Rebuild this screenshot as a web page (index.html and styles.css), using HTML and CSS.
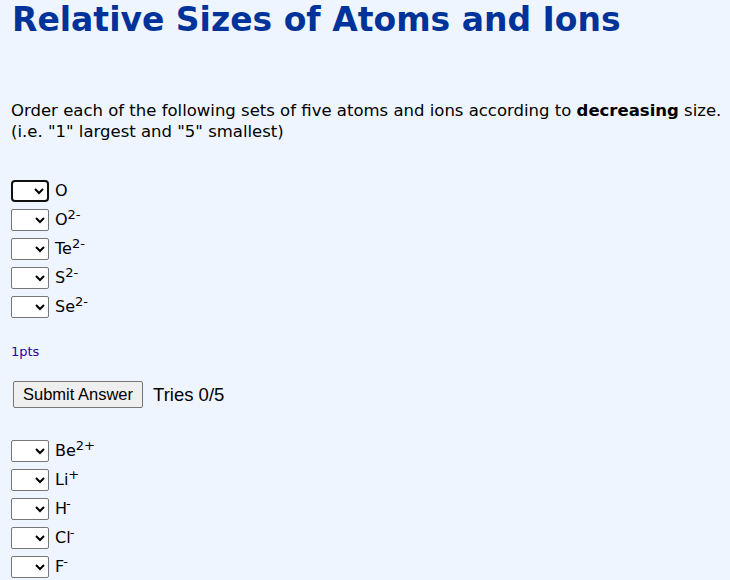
FILE: index.html
```html
<!DOCTYPE html>
<html lang="en">
<head>
  <meta charset="UTF-8">
  <title>Relative Sizes of Atoms and Ions</title>
  <link rel="stylesheet" href="styles.css">
</head>
<body>
  <h1 class="title">Relative Sizes of Atoms and Ions</h1>

  <p class="intro">Order each of the following sets of five atoms and ions according to <b>decreasing</b> size.<br>(i.e. "1" largest and "5" smallest)</p>

  <div class="rank-set">
    <div class="rank-row"><select class="rank first"><option></option><option>1</option><option>2</option><option>3</option><option>4</option><option>5</option></select><span class="species">O</span></div>
    <div class="rank-row"><select class="rank"><option></option><option>1</option><option>2</option><option>3</option><option>4</option><option>5</option></select><span class="species">O<sup>2-</sup></span></div>
    <div class="rank-row"><select class="rank"><option></option><option>1</option><option>2</option><option>3</option><option>4</option><option>5</option></select><span class="species">Te<sup>2-</sup></span></div>
    <div class="rank-row"><select class="rank"><option></option><option>1</option><option>2</option><option>3</option><option>4</option><option>5</option></select><span class="species">S<sup>2-</sup></span></div>
    <div class="rank-row"><select class="rank"><option></option><option>1</option><option>2</option><option>3</option><option>4</option><option>5</option></select><span class="species">Se<sup>2-</sup></span></div>
  </div>

  <div class="points">1pts</div>

  <div class="submit-row">
    <button class="submit">Submit Answer</button>
    <span class="tries">Tries 0/5</span>
  </div>

  <div class="rank-set second">
    <div class="rank-row"><select class="rank"><option></option><option>1</option><option>2</option><option>3</option><option>4</option><option>5</option></select><span class="species">Be<sup>2+</sup></span></div>
    <div class="rank-row"><select class="rank"><option></option><option>1</option><option>2</option><option>3</option><option>4</option><option>5</option></select><span class="species">Li<sup>+</sup></span></div>
    <div class="rank-row"><select class="rank"><option></option><option>1</option><option>2</option><option>3</option><option>4</option><option>5</option></select><span class="species">H<sup class="minus">-</sup></span></div>
    <div class="rank-row"><select class="rank"><option></option><option>1</option><option>2</option><option>3</option><option>4</option><option>5</option></select><span class="species">Cl<sup class="minus">-</sup></span></div>
    <div class="rank-row"><select class="rank"><option></option><option>1</option><option>2</option><option>3</option><option>4</option><option>5</option></select><span class="species">F<sup class="minus">-</sup></span></div>
  </div>
</body>
</html>
```

FILE: styles.css
```css
body {
  margin: 0;
  padding: 0 0 0 11px;
  background-color: #eef5ff;
  font-family: "DejaVu Sans", Verdana, sans-serif;
  color: #000;
}

.title {
  margin: 0;
  padding-left: 1px;
  font-size: 33px;
  line-height: 39px;
  color: #003399;
}

.intro {
  margin: 61px 0 0;
  font-size: 16.5px;
  line-height: 21px;
  white-space: nowrap;
}

.rank-set {
  margin-top: 38px;
  display: flex;
  flex-direction: column;
  gap: 7px;
}

.rank-set.second {
  margin-top: 32px;
}

.rank-row {
  display: flex;
  align-items: center;
  height: 22px;
}

.rank {
  width: 38px;
  height: 22px;
  margin: 0;
  border: 1px solid #767676;
  border-radius: 2px;
  background-color: #fff;
}

.rank.first {
  border: 2px solid #101010;
  border-radius: 4px;
}

.species {
  margin-left: 6px;
  font-size: 16px;
  line-height: 22px;
}

.species sup {
  font-size: 13px;
  line-height: 0;
  vertical-align: 6px;
}

.species sup.minus {
  margin-left: -1px;
}

.points {
  margin-top: 26px;
  font-size: 13px;
  color: #330099;
}

.submit-row {
  margin-top: 22px;
  display: flex;
  align-items: center;
  gap: 10px;
}

.submit {
  margin: 0 0 0 2px;
  padding: 3px 9px;
  font-family: "Liberation Sans", Arial, sans-serif;
  font-size: 16.5px;
  border: 1px solid #767676;
  border-radius: 2px;
  background-color: #efefef;
}

.tries {
  font-family: "Liberation Sans", Arial, sans-serif;
  font-size: 18.5px;
}
```
